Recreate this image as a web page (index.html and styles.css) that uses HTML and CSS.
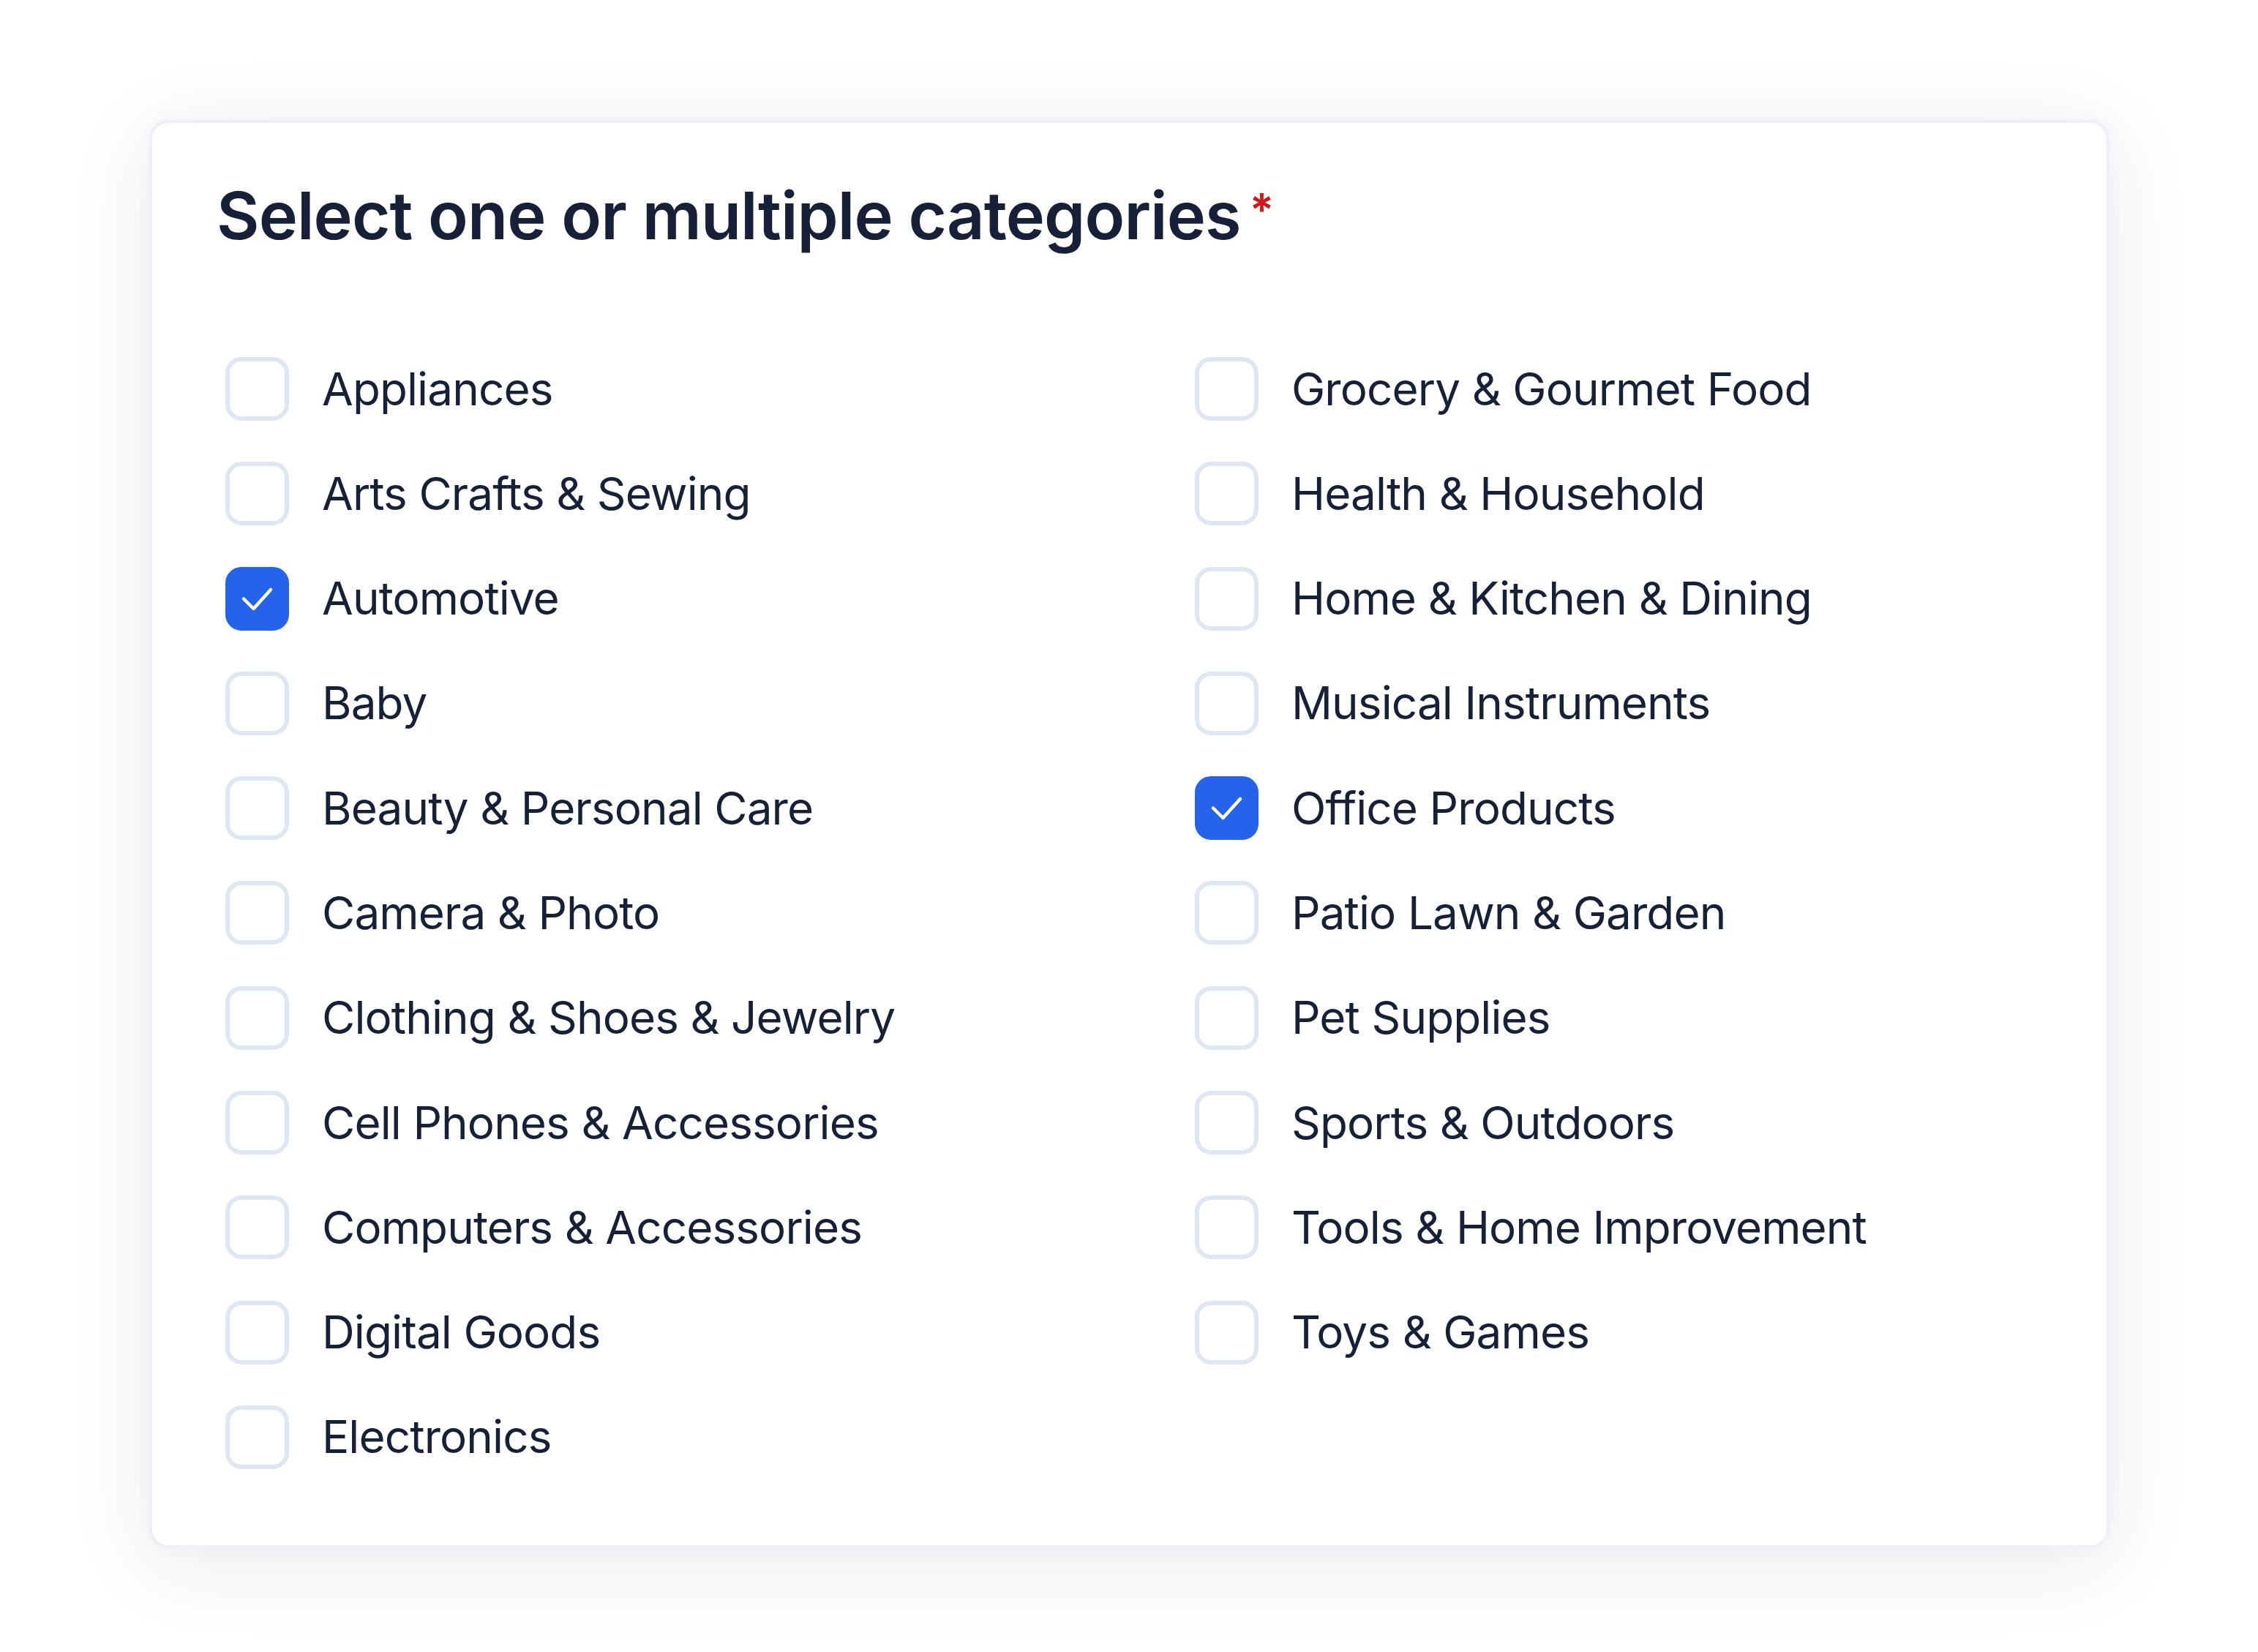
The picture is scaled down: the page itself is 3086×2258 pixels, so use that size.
FILE: index.html
```html
<!DOCTYPE html>
<html lang="en">
<head>
<meta charset="utf-8">
<title>Select categories</title>
<link rel="stylesheet" href="styles.css">
</head>
<body>
<div class="page">
  <section class="card">
    <h1 class="title">Select one or multiple categories<span class="req">*</span></h1>
    <div class="grid">
      <ul class="col">
        <li class="item"><span class="box"></span><span class="label">Appliances</span></li>
        <li class="item"><span class="box"></span><span class="label">Arts Crafts &amp; Sewing</span></li>
        <li class="item"><span class="box checked"><svg viewBox="0 0 87 87"><polyline points="25,43.5 38.5,57 62,31"/></svg></span><span class="label">Automotive</span></li>
        <li class="item"><span class="box"></span><span class="label">Baby</span></li>
        <li class="item"><span class="box"></span><span class="label">Beauty &amp; Personal Care</span></li>
        <li class="item"><span class="box"></span><span class="label">Camera &amp; Photo</span></li>
        <li class="item"><span class="box"></span><span class="label">Clothing &amp; Shoes &amp; Jewelry</span></li>
        <li class="item"><span class="box"></span><span class="label">Cell Phones &amp; Accessories</span></li>
        <li class="item"><span class="box"></span><span class="label">Computers &amp; Accessories</span></li>
        <li class="item"><span class="box"></span><span class="label">Digital Goods</span></li>
        <li class="item"><span class="box"></span><span class="label">Electronics</span></li>
      </ul>
      <ul class="col">
        <li class="item"><span class="box"></span><span class="label">Grocery &amp; Gourmet Food</span></li>
        <li class="item"><span class="box"></span><span class="label">Health &amp; Household</span></li>
        <li class="item"><span class="box"></span><span class="label">Home &amp; Kitchen &amp; Dining</span></li>
        <li class="item"><span class="box"></span><span class="label">Musical Instruments</span></li>
        <li class="item"><span class="box checked"><svg viewBox="0 0 87 87"><polyline points="25,43.5 38.5,57 62,31"/></svg></span><span class="label">Office Products</span></li>
        <li class="item"><span class="box"></span><span class="label">Patio Lawn &amp; Garden</span></li>
        <li class="item"><span class="box"></span><span class="label">Pet Supplies</span></li>
        <li class="item"><span class="box"></span><span class="label">Sports &amp; Outdoors</span></li>
        <li class="item"><span class="box"></span><span class="label">Tools &amp; Home Improvement</span></li>
        <li class="item"><span class="box"></span><span class="label">Toys &amp; Games</span></li>
      </ul>
    </div>
  </section>
</div>
</body>
</html>
```

FILE: styles.css
```css
html, body {
  margin: 0;
  padding: 0;
  background: #ffffff;
}

body {
  font-family: Inter, "Noto Sans", "Liberation Sans", sans-serif;
  color: #172039;
  min-height: 2258px;
}

.page {
  padding: 164px 0 142px 204px;
}

.card {
  box-sizing: border-box;
  width: 2679px;
  height: 1952px;
  background: #ffffff;
  border: 4px solid #eff0f7;
  border-radius: 26px;
  box-shadow: 0 20px 120px rgba(30, 40, 100, 0.09), 0 2px 24px rgba(30, 40, 100, 0.03);
  padding: 73px 92px 0 88px;
}

.title {
  margin: 0;
  font-size: 90px;
  line-height: 1.2;
  font-weight: 600;
  letter-spacing: -0.9px;
  color: #172039;
  display: flex;
  align-items: flex-start;
}

.req {
  color: #d7141a;
  font-size: 62px;
  font-weight: 600;
  line-height: 1;
  letter-spacing: 0;
  margin-left: 12px;
  margin-top: 15px;
}

.grid {
  display: grid;
  grid-template-columns: 1325px 1fr;
  margin: 139px 0 0 12px;
}

.col {
  list-style: none;
  margin: 0;
  padding: 0;
  display: flex;
  flex-direction: column;
  gap: 56.3px;
}

.item {
  display: flex;
  align-items: center;
  height: 87px;
  gap: 45px;
}

.box {
  box-sizing: border-box;
  flex: 0 0 87px;
  width: 87px;
  height: 87px;
  border: 6px solid #e1e6f3;
  border-radius: 22px;
  background: #ffffff;
  display: flex;
  align-items: center;
  justify-content: center;
}

.box.checked {
  background: #2563eb;
  border-color: #2563eb;
}

.box svg {
  width: 87px;
  height: 87px;
  flex: 0 0 87px;
  fill: none;
  stroke: #ffffff;
  stroke-width: 4.5;
  stroke-linecap: round;
  stroke-linejoin: round;
}

.label {
  font-size: 62px;
  line-height: 1;
  font-weight: 400;
  letter-spacing: -0.9px;
  color: #172039;
  white-space: nowrap;
}
```
